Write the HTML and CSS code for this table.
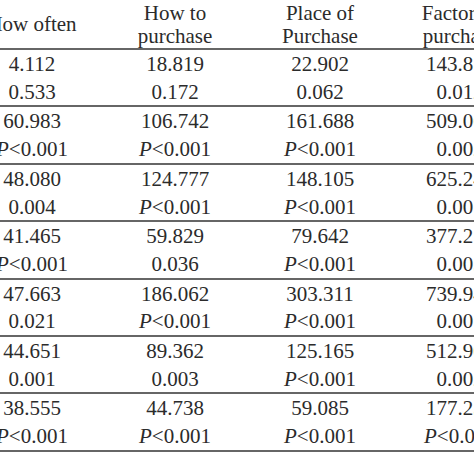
FILE: index.html
```html
<!DOCTYPE html>
<html>
<head>
<meta charset="utf-8">
<link rel="stylesheet" href="styles.css">
</head>
<body>
<div class="wrap">
<table class="stats">
<colgroup>
<col class="c1"><col class="c2"><col class="c3"><col class="c4">
</colgroup>
<thead>
<tr><th>How often</th><th>How to<br>purchase</th><th>Place of<br>Purchase</th><th>Factor of<br>purchase</th></tr>
</thead>
<tbody>
<tr><td>4.112</td><td>18.819</td><td>22.902</td><td>143.856</td></tr>
<tr class="end"><td>0.533</td><td>0.172</td><td>0.062</td><td>0.012</td></tr>
<tr><td>60.983</td><td>106.742</td><td>161.688</td><td>509.063</td></tr>
<tr class="end"><td><i>P</i>&lt;0.001</td><td><i>P</i>&lt;0.001</td><td><i>P</i>&lt;0.001</td><td>0.002</td></tr>
<tr><td>48.080</td><td>124.777</td><td>148.105</td><td>625.241</td></tr>
<tr class="end"><td>0.004</td><td><i>P</i>&lt;0.001</td><td><i>P</i>&lt;0.001</td><td>0.001</td></tr>
<tr><td>41.465</td><td>59.829</td><td>79.642</td><td>377.218</td></tr>
<tr class="end"><td><i>P</i>&lt;0.001</td><td>0.036</td><td><i>P</i>&lt;0.001</td><td>0.003</td></tr>
<tr><td>47.663</td><td>186.062</td><td>303.311</td><td>739.945</td></tr>
<tr class="end"><td>0.021</td><td><i>P</i>&lt;0.001</td><td><i>P</i>&lt;0.001</td><td>0.001</td></tr>
<tr><td>44.651</td><td>89.362</td><td>125.165</td><td>512.907</td></tr>
<tr class="end"><td>0.001</td><td>0.003</td><td><i>P</i>&lt;0.001</td><td>0.002</td></tr>
<tr><td>38.555</td><td>44.738</td><td>59.085</td><td>177.231</td></tr>
<tr class="end"><td><i>P</i>&lt;0.001</td><td><i>P</i>&lt;0.001</td><td><i>P</i>&lt;0.001</td><td><i>P</i>&lt;0.001</td></tr>
</tbody>
</table>
</div>
</body>
</html>
```
FILE: styles.css
```css
html, body {
  margin: 0;
  padding: 0;
  background: #ffffff;
}
.wrap {
  width: 474px;
  height: 474px;
  overflow: hidden;
}
.stats {
  margin-left: -40px;
  border-collapse: collapse;
  table-layout: fixed;
  width: 566px;
  font-family: "Liberation Serif", "Times New Roman", serif;
  font-size: 21px;
  color: #2b2b2b;
}
.c1 { width: 144px; }
.c2 { width: 142px; }
.c3 { width: 148px; }
.c4 { width: 132px; }
.stats th {
  font-weight: normal;
  line-height: 23px;
  height: 49px;
  padding: 1px 0 0 0;
  vertical-align: middle;
  text-align: center;
  white-space: nowrap;
  border-bottom: 2px solid #666666;
  box-sizing: border-box;
}
.stats td {
  height: 27.7px;
  line-height: 25.7px;
  padding: 2px 0 0 0;
  box-sizing: border-box;
  text-align: center;
  white-space: nowrap;
}
.stats tr.end td {
  border-bottom: 2px solid #666666;
}
.stats i {
  font-style: italic;
}
```
